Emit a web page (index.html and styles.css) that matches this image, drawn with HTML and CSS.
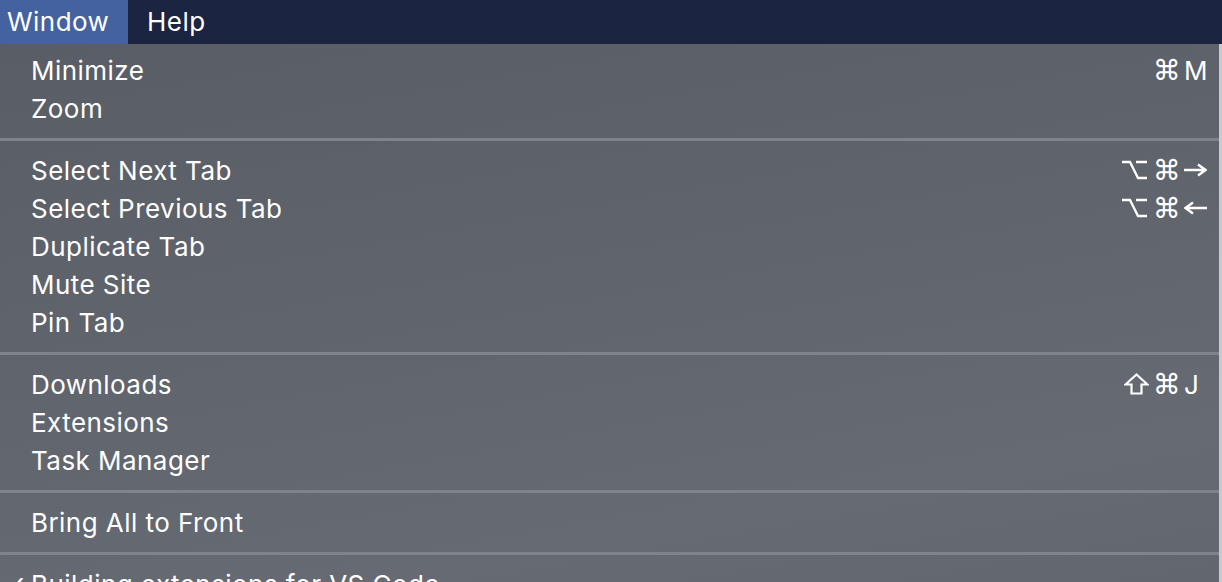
FILE: index.html
```html
<!DOCTYPE html>
<html>
<head>
<meta charset="utf-8">
<link rel="stylesheet" href="styles.css">
</head>
<body>
<div class="screen">
  <div class="menubar">
    <div class="mb-item active">Window</div>
    <div class="mb-item">Help</div>
  </div>
  <div class="stage">
    <div class="menu">
      <div class="item"><span class="label">Minimize</span><span class="sc"><span class="mods">⌘</span><span class="key">M</span></span></div>
      <div class="item"><span class="label">Zoom</span></div>
      <div class="sep"></div>
      <div class="item"><span class="label">Select Next Tab</span><span class="sc"><span class="mods"><svg class="opt" width="25" height="20" viewBox="0 0 25 20"><path d="M0 2H8L16 18H25M14 2H25" fill="none" stroke="#fff" stroke-width="2.3"/></svg>⌘</span><span class="key"><svg class="arrow" width="23" height="14" viewBox="0 0 23 14"><path d="M0 7H21M14 1.5L21.5 7L14 12.5" fill="none" stroke="#fff" stroke-width="2.4"/></svg></span></span></div>
      <div class="item"><span class="label">Select Previous Tab</span><span class="sc"><span class="mods"><svg class="opt" width="25" height="20" viewBox="0 0 25 20"><path d="M0 2H8L16 18H25M14 2H25" fill="none" stroke="#fff" stroke-width="2.3"/></svg>⌘</span><span class="key"><svg class="arrow" width="23" height="14" viewBox="0 0 23 14"><path d="M23 7H2M9 1.5L1.5 7L9 12.5" fill="none" stroke="#fff" stroke-width="2.4"/></svg></span></span></div>
      <div class="item"><span class="label">Duplicate Tab</span></div>
      <div class="item"><span class="label">Mute Site</span></div>
      <div class="item"><span class="label">Pin Tab</span></div>
      <div class="sep"></div>
      <div class="item"><span class="label">Downloads</span><span class="sc"><span class="mods"><svg class="shift" width="25" height="22" viewBox="0 0 25 22"><path d="M12.5 1.5L23.5 11.5H17.5V20.5H7.5V11.5H1.5Z" fill="none" stroke="#fff" stroke-width="2.2" stroke-linejoin="miter"/></svg>⌘</span><span class="key">J</span></span></div>
      <div class="item"><span class="label">Extensions</span></div>
      <div class="item"><span class="label">Task Manager</span></div>
      <div class="sep"></div>
      <div class="item"><span class="label">Bring All to Front</span></div>
      <div class="sep"></div>
      <div class="item"><span class="check">✓</span><span class="label">Building extensions for VS Code</span></div>
    </div>
    <div class="edge"></div>
  </div>
</div>
</body>
</html>
```
FILE: styles.css
```css
* { box-sizing: border-box; }
html, body {
  margin: 0;
  padding: 0;
  width: 1222px;
  height: 582px;
  overflow: hidden;
  background: #5d626b;
}
.screen {
  display: flex;
  flex-direction: column;
  width: 1222px;
  height: 582px;
  font-family: Inter, "Noto Sans", "DejaVu Sans", sans-serif;
  color: #ffffff;
}
.menubar {
  display: flex;
  height: 44px;
  background: #1b2440;
  flex-shrink: 0;
}
.mb-item {
  font-size: 26px;
  letter-spacing: 0.45px;
  line-height: 44px;
  padding: 0 18px 0 19px;
}
.mb-item.active {
  background: #4562a0;
  width: 128px;
  padding-left: 7px;
}
.stage {
  display: flex;
  flex: 1;
  min-height: 0;
}
.menu {
  flex: 1;
  padding-top: 8px;
  background: linear-gradient(170deg, #595d66 0%, #5f646d 45%, #656a73 80%, #62666f 100%);
  display: flex;
  flex-direction: column;
}
.edge {
  width: 3px;
  background: #c9cacc;
}
.item {
  position: relative;
  display: flex;
  align-items: center;
  height: 38px;
  padding-left: 31px;
  padding-right: 11px;
  padding-bottom: 2px;
  font-size: 26px;
  letter-spacing: 0.45px;
  flex-shrink: 0;
}
.label { flex: 1; }
.check {
  position: absolute;
  left: 5px;
  top: 4px;
  font-family: "DejaVu Sans", sans-serif;
  font-size: 27px;
}
.sc {
  display: flex;
  align-items: center;
  font-family: "DejaVu Sans", sans-serif;
  font-size: 28px;
  letter-spacing: 0;
}
.mods {
  display: flex;
  align-items: center;
  justify-content: flex-end;
  padding-right: 3px;
}
.opt {
  display: block;
  margin-right: 6px;
}
.shift {
  display: block;
  margin-right: 4px;
}
.key {
  display: flex;
  align-items: center;
  width: 24px;
  font-family: Inter, "DejaVu Sans", sans-serif;
  font-size: 26px;
}
.arrow { display: block; }
.sep {
  height: 24px;
  flex-shrink: 0;
  display: flex;
  align-items: center;
}
.sep::before {
  content: "";
  display: block;
  width: 100%;
  height: 3px;
  margin-top: -2px;
  background: #7f838b;
}
```
